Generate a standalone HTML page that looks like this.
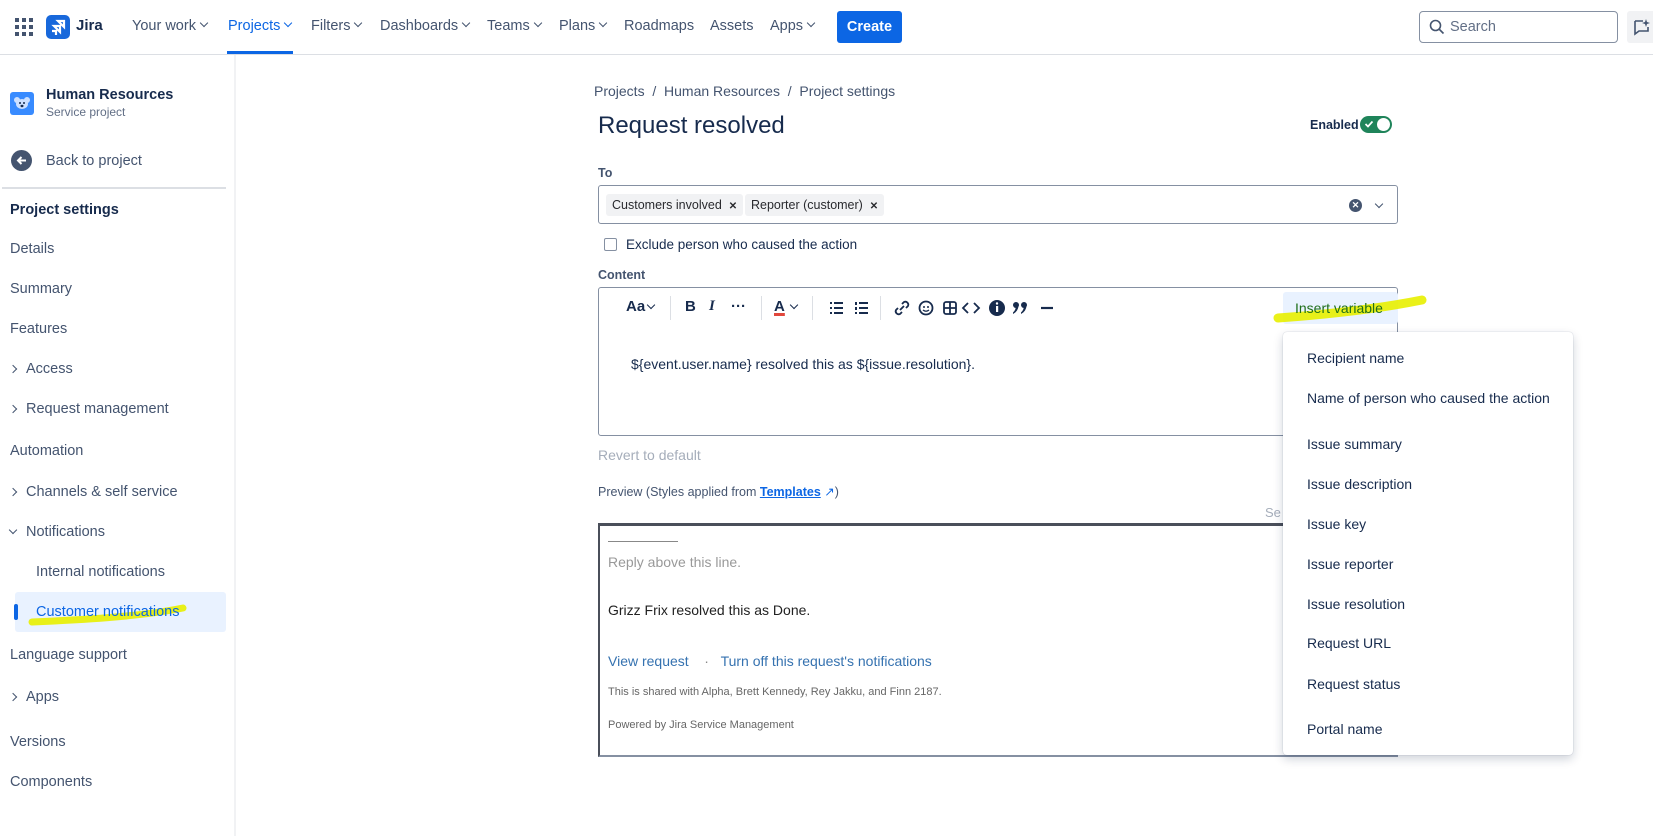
<!DOCTYPE html>
<html><head><meta charset="utf-8"><style>
*{margin:0;padding:0;box-sizing:border-box}
body{width:1653px;height:836px;position:relative;overflow:hidden;background:#fff;font-family:"Liberation Sans",sans-serif;color:#172b4d;font-size:14px}
.a{position:absolute;white-space:nowrap}
.nav{top:18px;font-size:14.5px;color:#44546f}
.side{left:10px;font-size:14.5px;color:#44546f;transform:translateY(-50%)}
.dd{left:1307px;font-size:14px;color:#172b4d;transform:translateY(-50%)}
.chev{display:inline-block;width:6px;height:6px;border-right:1.8px solid currentColor;border-bottom:1.8px solid currentColor;transform:rotate(45deg);margin-left:5px;vertical-align:4px}
.rchev{display:inline-block;width:6px;height:6px;border-right:1.8px solid #44546f;border-bottom:1.8px solid #44546f;transform:rotate(-45deg);margin-right:10px;vertical-align:1px}
.dchev{display:inline-block;width:6px;height:6px;border-right:1.8px solid #44546f;border-bottom:1.8px solid #44546f;transform:rotate(45deg);margin-right:10px;vertical-align:3px}
.tb{top:298px;font-size:15px;font-weight:bold;color:#172b4d}
.sep{position:absolute;top:296px;width:1px;height:24px;background:#dcdfe4}
.chip{position:absolute;top:194px;height:22px;background:#f1f2f4;border-radius:3px;font-size:12.5px;color:#292a2e;line-height:22px;padding:0 6px;white-space:nowrap}
</style></head><body>
<div class="a" style="left:0;top:54px;width:1653px;height:1px;background:#dcdfe4"></div>
<svg class="a" style="left:15px;top:18px" width="18" height="18"><g fill="#44546f"><rect x="0" y="0" width="4" height="4"/><rect x="7" y="0" width="4" height="4"/><rect x="14" y="0" width="4" height="4"/><rect x="0" y="7" width="4" height="4"/><rect x="7" y="7" width="4" height="4"/><rect x="14" y="7" width="4" height="4"/><rect x="0" y="14" width="4" height="4"/><rect x="7" y="14" width="4" height="4"/><rect x="14" y="14" width="4" height="4"/></g></svg>
<div class="a" style="left:46px;top:15px;width:24px;height:24px;border-radius:5px;background:#1868db"></div>
<svg class="a" style="left:49px;top:18px" width="18" height="18"><path d="M9 3 L15 3 L15 9 Z M5 8 L11 8 L11 14 Z M3 13 L7 13 L7 17" fill="none" stroke="#fff" stroke-width="2.2"/></svg>
<div class="a" style="left:76px;top:17px;font-size:15px;font-weight:bold;color:#172b4d">Jira</div>
<div class="a nav" style="left:132px">Your work<span class="chev"></span></div>
<div class="a nav" style="left:228px;color:#0c66e4">Projects<span class="chev"></span></div>
<div class="a" style="left:227px;top:51px;width:66px;height:3px;background:#0c66e4"></div>
<div class="a nav" style="left:311px">Filters<span class="chev"></span></div>
<div class="a nav" style="left:380px">Dashboards<span class="chev"></span></div>
<div class="a nav" style="left:487px">Teams<span class="chev"></span></div>
<div class="a nav" style="left:559px">Plans<span class="chev"></span></div>
<div class="a nav" style="left:624px">Roadmaps</div>
<div class="a nav" style="left:710px">Assets</div>
<div class="a nav" style="left:770px">Apps<span class="chev"></span></div>
<div class="a" style="left:837px;top:11px;width:65px;height:32px;border-radius:3px;background:#0c66e4;color:#fff;font-size:14.5px;font-weight:bold;text-align:center;line-height:32px">Create</div>
<div class="a" style="left:1419px;top:11px;width:199px;height:32px;border:1px solid #8590a2;border-radius:4px"></div>
<svg class="a" style="left:1429px;top:19px" width="16" height="16"><circle cx="6.5" cy="6.5" r="5" fill="none" stroke="#44546f" stroke-width="1.6"/><path d="M10 10 L14.5 14.5" stroke="#44546f" stroke-width="1.6"/></svg>
<div class="a" style="left:1450px;top:19px;font-size:14.5px;color:#626f86">Search</div>
<div class="a" style="left:1627px;top:11px;width:30px;height:32px;border-radius:3px;background:#f1f2f4"></div>
<svg class="a" style="left:1633px;top:18px" width="18" height="18"><path d="M2 3 H10 M2 3 V16 L6 13 H15 V9" fill="none" stroke="#44546f" stroke-width="1.6"/><path d="M13 1 L14 4 L17 5 L14 6 L13 9 L12 6 L9 5 L12 4Z" fill="#44546f"/></svg>

<div class="a" style="left:234px;top:55px;width:2px;height:781px;background:#f1f2f4"></div>
<div class="a" style="left:10px;top:92px;width:24px;height:23px;border-radius:3px;background:#388bff"></div>
<svg class="a" style="left:13px;top:95px" width="18" height="17"><circle cx="4" cy="5" r="3" fill="#cce0ff"/><circle cx="14" cy="5" r="3" fill="#cce0ff"/><ellipse cx="9" cy="9" rx="6" ry="5" fill="#cce0ff"/><circle cx="7" cy="8" r="1" fill="#172b4d"/><circle cx="11" cy="8" r="1" fill="#172b4d"/><ellipse cx="9" cy="11" rx="1.5" ry="1.2" fill="#172b4d"/></svg>
<div class="a" style="left:46px;top:87px;font-size:14.5px;font-weight:bold;color:#172b4d">Human Resources</div>
<div class="a" style="left:46px;top:105px;font-size:12px;color:#626f86">Service project</div>
<div class="a" style="left:11px;top:150px;width:21px;height:21px;border-radius:50%;background:#44546f"></div>
<svg class="a" style="left:15px;top:154px" width="13" height="13"><path d="M11 6.5 H3 M6.5 3 L3 6.5 L6.5 10" fill="none" stroke="#fff" stroke-width="2"/></svg>
<div class="a side" style="left:46px;top:161px">Back to project</div>
<div class="a" style="left:2px;top:187px;width:224px;height:2px;background:#dcdfe4"></div>
<div class="a side" style="top:210px;font-weight:bold;color:#172b4d">Project settings</div>
<div class="a side" style="top:249px">Details</div>
<div class="a side" style="top:289px">Summary</div>
<div class="a side" style="top:329px">Features</div>
<div class="a side" style="top:369px"><span class="rchev"></span>Access</div>
<div class="a side" style="top:409px"><span class="rchev"></span>Request management</div>
<div class="a side" style="top:451px">Automation</div>
<div class="a side" style="top:492px"><span class="rchev"></span>Channels &amp; self service</div>
<div class="a side" style="top:532px"><span class="dchev"></span>Notifications</div>
<div class="a side" style="left:36px;top:572px">Internal notifications</div>
<div class="a" style="left:15px;top:592px;width:211px;height:40px;background:#e9f2ff;border-radius:3px"></div>
<div class="a" style="left:14px;top:604px;width:4px;height:16px;border-radius:2px;background:#0c66e4"></div>
<svg class="a" style="left:28px;top:600px" width="160" height="28"><path d="M4 22 C50 20 110 17 155 8" stroke="#e8f000" stroke-width="7" fill="none" stroke-linecap="round" opacity=".9"/></svg>
<div class="a side" style="left:36px;top:612px;color:#0c66e4">Customer notifications</div>
<div class="a side" style="top:655px">Language support</div>
<div class="a side" style="top:697px"><span class="rchev"></span>Apps</div>
<div class="a side" style="top:742px">Versions</div>
<div class="a side" style="top:782px">Components</div>

<div class="a" style="left:594px;top:83px;font-size:14px;color:#44546f">Projects &nbsp;/ &nbsp;Human Resources &nbsp;/ &nbsp;Project settings</div>
<div class="a" style="left:598px;top:112px;font-size:24px;font-weight:500;color:#172b4d">Request resolved</div>
<div class="a" style="left:1310px;top:118px;font-size:12.5px;font-weight:bold;color:#172b4d">Enabled</div>
<div class="a" style="left:1360px;top:116px;width:32px;height:17px;border-radius:9px;background:#1f845a"></div>
<div class="a" style="left:1377px;top:118px;width:13px;height:13px;border-radius:50%;background:#fff"></div>
<svg class="a" style="left:1364px;top:119px" width="10" height="10"><path d="M1.5 5 L4 7.5 L8.5 2.5" fill="none" stroke="#fff" stroke-width="1.7"/></svg>
<div class="a" style="left:598px;top:166px;font-size:12.5px;font-weight:bold;color:#44546f">To</div>
<div class="a" style="left:598px;top:185px;width:800px;height:39px;border:1px solid #8590a2;border-radius:3px"></div>
<div class="chip" style="left:606px">Customers involved &nbsp;<b style="font-size:10px">✕</b></div>
<div class="chip" style="left:745px">Reporter (customer) &nbsp;<b style="font-size:10px">✕</b></div>
<div class="a" style="left:1349px;top:199px;width:13px;height:13px;border-radius:50%;background:#44546f;color:#fff;font-size:9px;text-align:center;line-height:13px;font-weight:bold">✕</div>
<div class="a" style="left:1376px;top:198px;color:#44546f"><span class="chev" style="margin:0"></span></div>
<div class="a" style="left:604px;top:238px;width:13px;height:13px;border:1.5px solid #8590a2;border-radius:2px"></div>
<div class="a" style="left:626px;top:237px;font-size:13.5px;color:#172b4d">Exclude person who caused the action</div>
<div class="a" style="left:598px;top:268px;font-size:12.5px;font-weight:bold;color:#44546f">Content</div>
<div class="a" style="left:598px;top:287px;width:800px;height:149px;border:1px solid #8590a2;border-radius:3px"></div>
<div class="a tb" style="left:626px">Aa<span class="chev" style="margin-left:3px;vertical-align:3px"></span></div>
<div class="sep" style="left:670px"></div>
<div class="a tb" style="left:685px">B</div>
<div class="a tb" style="left:709px;font-style:italic;font-family:'Liberation Serif',serif">I</div>
<div class="a tb" style="left:731px">···</div>
<div class="sep" style="left:761px"></div>
<div class="a tb" style="left:774px;text-decoration:underline;text-decoration-color:#e2483d;text-decoration-thickness:3px">A<span class="chev" style="margin-left:6px;vertical-align:3px"></span></div>
<div class="sep" style="left:812px"></div>
<svg class="a" style="left:830px;top:301px" width="50" height="14"><g fill="#172b4d"><rect x="0" y="1" width="2" height="2"/><rect x="0" y="6" width="2" height="2"/><rect x="0" y="11" width="2" height="2"/><rect x="4" y="1" width="9" height="2"/><rect x="4" y="6" width="9" height="2"/><rect x="4" y="11" width="9" height="2"/><rect x="25" y="1" width="2" height="3"/><rect x="25" y="6" width="2" height="3"/><rect x="25" y="11" width="2" height="2"/><rect x="29" y="1" width="9" height="2"/><rect x="29" y="6" width="9" height="2"/><rect x="29" y="11" width="9" height="2"/></g></svg>
<div class="sep" style="left:880px"></div>
<svg class="a" style="left:893px;top:299px" width="160" height="20"><g fill="none" stroke="#172b4d" stroke-width="1.8"><path d="M7 11 L11 7 M5 9 L3 11 A3 3 0 0 0 7 15 L9 13 M9 5 L11 3 A3 3 0 0 1 15 7 L13 9"/><circle cx="33" cy="9" r="6.5"/><rect x="51" y="3" width="12" height="12" rx="2"/><path d="M51 9 H63 M57 3 V15"/><path d="M75 4 L70 9 L75 14 M81 4 L86 9 L81 14"/><path d="M148 9 H162" stroke-width="2.2"/></g><circle cx="31" cy="8" r="1" fill="#172b4d"/><circle cx="35" cy="8" r="1" fill="#172b4d"/><path d="M30 11 Q33 13.5 36 11" fill="none" stroke="#172b4d" stroke-width="1.3"/><circle cx="104" cy="9" r="8" fill="#172b4d"/><rect x="103" y="7" width="2.2" height="6" fill="#fff"/><circle cx="104" cy="4.5" r="1.2" fill="#fff"/><g fill="#172b4d"><circle cx="123" cy="6" r="3"/><circle cx="131" cy="6" r="3"/><path d="M125.5 6 Q125.5 12 120 15 L120 13.5 Q123 11 123 6Z M133.5 6 Q133.5 12 128 15 L128 13.5 Q131 11 131 6Z"/></g></svg>
<div class="a" style="left:1283px;top:292px;width:115px;height:32px;background:#e9f2ff;border-radius:3px"></div>
<svg class="a" style="left:1272px;top:292px" width="160" height="34"><path d="M6 26 C60 22 110 16 150 8" stroke="#e8f000" stroke-width="9" fill="none" stroke-linecap="round" opacity=".9"/></svg>
<div class="a" style="left:1295px;top:300px;font-size:14px;color:#1f6e1a">Insert variable</div>
<div class="a" style="left:631px;top:356px;font-size:14px;color:#172b4d">${event.user.name} resolved this as ${issue.resolution}.</div>
<div class="a" style="left:598px;top:447px;font-size:14px;color:#a5adba">Revert to default</div>
<div class="a" style="left:598px;top:484px;font-size:12.5px;color:#44546f">Preview (Styles applied from <span style="color:#0c66e4;text-decoration:underline;font-weight:bold">Templates</span> <span style="color:#0c66e4">↗</span>)</div>
<div class="a" style="left:1265px;top:505px;font-size:13px;color:#a5adba">Se</div>
<div class="a" style="left:598px;top:523px;width:800px;height:234px;border-top:3px solid #4a4f5a;border-left:2px solid #4a4f5a;border-bottom:2px solid #8590a2"></div>
<div class="a" style="left:608px;top:541px;width:70px;height:1px;background:#888"></div>
<div class="a" style="left:608px;top:554px;font-size:14px;color:#999">Reply above this line.</div>
<div class="a" style="left:608px;top:602px;font-size:14px;color:#222">Grizz Frix resolved this as Done.</div>
<div class="a" style="left:608px;top:653px;font-size:14px;color:#3572b0">View request <span style="color:#888">&nbsp;&nbsp; · &nbsp;&nbsp;</span>Turn off this request's notifications</div>
<div class="a" style="left:608px;top:686px;font-size:11px;color:#666">This is shared with Alpha, Brett Kennedy, Rey Jakku, and Finn 2187.</div>
<div class="a" style="left:608px;top:719px;font-size:11px;color:#666">Powered by Jira Service Management</div>

<div class="a" style="left:1283px;top:332px;width:290px;height:423px;background:#fff;border-radius:4px;box-shadow:0 4px 10px rgba(9,30,66,.2),0 0 1px rgba(9,30,66,.3)"></div>
<div class="a dd" style="top:358px">Recipient name</div>
<div class="a dd" style="top:398px">Name of person who caused the action</div>
<div class="a dd" style="top:444px">Issue summary</div>
<div class="a dd" style="top:484px">Issue description</div>
<div class="a dd" style="top:524px">Issue key</div>
<div class="a dd" style="top:564px">Issue reporter</div>
<div class="a dd" style="top:604px">Issue resolution</div>
<div class="a dd" style="top:643px">Request URL</div>
<div class="a dd" style="top:684px">Request status</div>
<div class="a dd" style="top:729px">Portal name</div>
</body></html>
